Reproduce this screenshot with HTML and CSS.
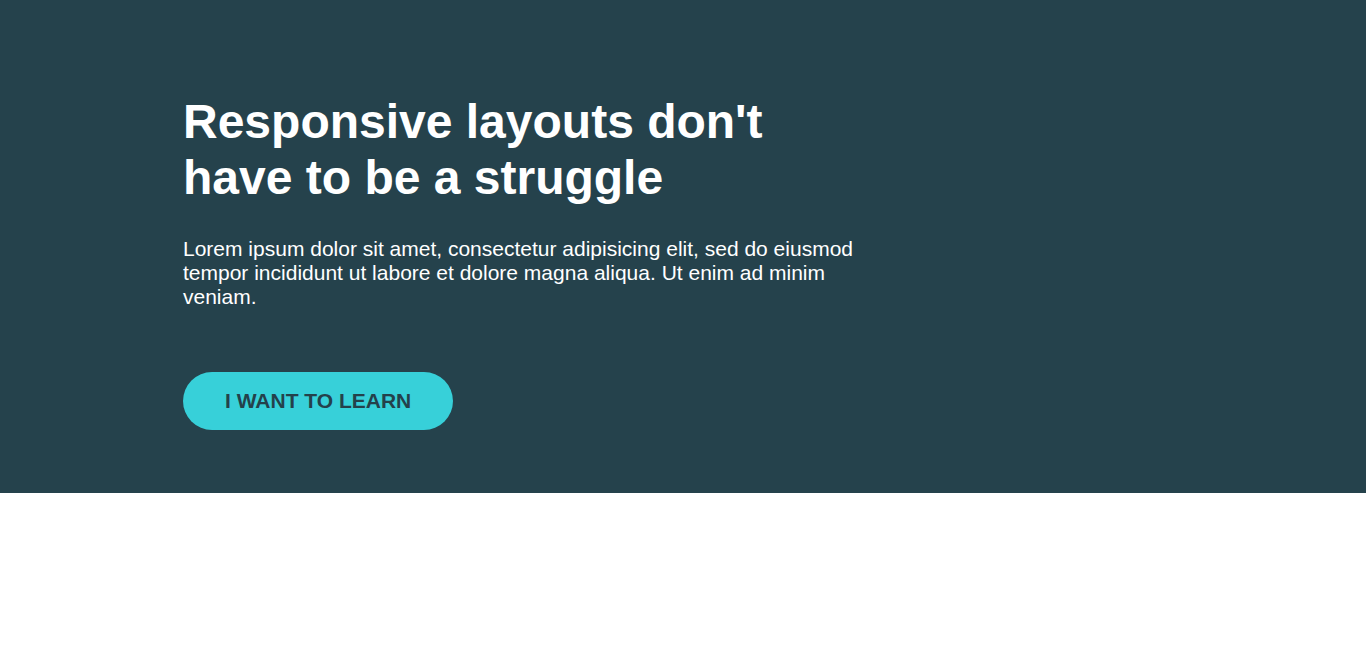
FILE: index.html
```html
<!DOCTYPE html>
<html lang="en">
<head>
<meta charset="utf-8">
<title>Responsive layouts</title>
<link rel="stylesheet" href="styles.css">
</head>
<body>
<section class="hero">
  <div class="container">
    <div class="hero-content">
      <h1 class="hero-title">Responsive layouts don't have to be a struggle</h1>
      <p class="hero-text">Lorem ipsum dolor sit amet, consectetur adipisicing elit, sed do eiusmod tempor incididunt ut labore et dolore magna aliqua. Ut enim ad minim veniam.</p>
      <a class="btn" href="#">I want to learn</a>
    </div>
  </div>
</section>
</body>
</html>
```
FILE: styles.css
```css
* { box-sizing: border-box; }
html, body { margin: 0; padding: 0; }
body {
  font-family: "Liberation Sans", Arial, sans-serif;
  background: #ffffff;
  color: #ffffff;
}
.hero {
  background: #25424c;
  padding: 94px 0 63px;
}
.container {
  width: 1000px;
  margin: 0 auto;
}
.hero-content {
  max-width: 690px;
}
.hero-title {
  margin: 0;
  max-width: 620px;
  font-size: 48px;
  line-height: 56px;
  font-weight: 700;
}
.hero-text {
  margin: 31px 0 0;
  font-size: 21px;
  line-height: 24px;
}
.btn {
  display: inline-block;
  margin-top: 63px;
  height: 58px;
  line-height: 58px;
  padding: 0 42px;
  border-radius: 29px;
  background: #37d0d9;
  color: #24414b;
  font-size: 21px;
  font-weight: 700;
  text-transform: uppercase;
  text-decoration: none;
}
```
